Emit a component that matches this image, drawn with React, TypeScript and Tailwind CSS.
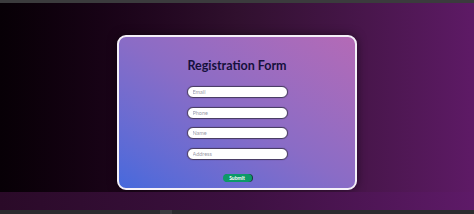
export default function App() {
  const fields = ['Email', 'Phone', 'Name', 'Address'];

  return (
    <div className="w-[474px] h-[214px] flex flex-col overflow-hidden font-['Lato',sans-serif]">
      <div className="h-[3px] bg-[#3b3b3d]" />

      <div className="h-[189px] flex justify-center pt-[32px] bg-gradient-to-r from-[#070006] via-[#30102e] to-[#5e1a66]">
        <div className="w-[240px] h-[155px] rounded-[9px] border-2 border-[#f4f0f8] bg-gradient-to-tr from-[#4669dc] via-[#8a6cc6] to-[#b46ab6] shadow-[0_0_10px_rgba(0,0,0,0.5)] flex flex-col items-center pt-[19px]">
          <h1 className="text-[12.5px] leading-[20px] font-bold text-[#15103c]">
            Registration Form
          </h1>

          <form className="flex flex-col items-center mt-[10px]" onSubmit={(e) => e.preventDefault()}>
            {fields.map((f) => (
              <input
                key={f}
                type="text"
                placeholder={f}
                className="w-[101px] h-[12px] mb-[8.5px] rounded-full bg-white border border-[#4a3e66] shadow-[0_0_1px_rgba(40,20,60,0.6)] px-[5px] text-[5.5px] text-gray-700 placeholder:text-[#9a9aa6] outline-none"
              />
            ))}
            <button
              type="submit"
              className="mt-[6px] w-[29px] h-[8px] rounded-[4px] bg-[#0c9a68] text-white text-[5px] font-bold leading-[8px] shadow-[1px_0_0_#1a3a3a]"
            >
              Submit
            </button>
          </form>
        </div>
      </div>

      <div className="h-[18px] bg-gradient-to-r from-[#2a0a28] via-[#3c1040] to-[#5e1a68]" />
      <div className="h-[4px] bg-[#2b2b2e] flex">
        <div className="ml-[160px] w-[12px] bg-[#3c3c40]" />
      </div>
    </div>
  );
}
